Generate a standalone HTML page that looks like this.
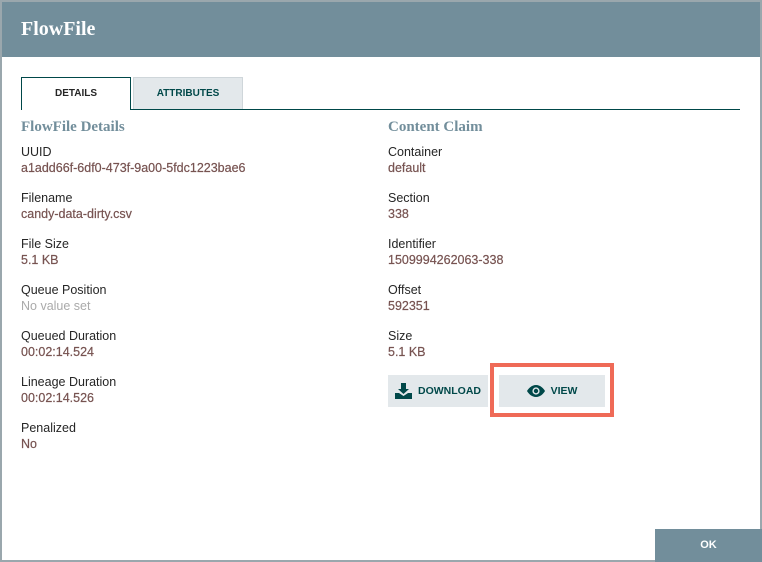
<!DOCTYPE html>
<html><head><style>
*{margin:0;padding:0;box-sizing:border-box}
body{width:762px;height:562px;background:#fff;position:relative;overflow:hidden;font-family:"Liberation Sans",sans-serif}
.hdr{position:absolute;left:0;top:0;width:762px;height:57px;background:#728e9b;border-top:2px solid #9aa7ad}
.hdr span{position:absolute;left:21px;top:16px;color:#fff;font:bold 20px "Liberation Serif",serif}
.tab{position:absolute;top:77px;height:33px;font-size:10px;font-weight:bold;text-align:center;line-height:32px}
.t1{left:21px;width:110px;border:1px solid #004849;border-bottom:none;background:#fff;color:#262626;z-index:2;height:33px}
.t2{left:133px;width:110px;background:#e3e8eb;color:#004849;border:1px solid #cfd6da;border-bottom:none;height:32px}
.line{position:absolute;left:21px;top:109px;width:719px;height:1px;background:#004849}
h3{position:absolute;font:bold 15px "Liberation Serif",serif;color:#728e9b}
.l{position:absolute;font-size:12.5px;color:#262626}
.v{position:absolute;font-size:12.5px;color:#775351;font-weight:500;-webkit-text-stroke:0.2px #775351}
.btn{position:absolute;background:#e3e8eb;color:#004849;font-size:10.5px;font-weight:bold;display:flex;align-items:center;justify-content:center;gap:6px}
.hl{position:absolute;left:490px;top:363px;width:124px;height:54px;border:4px solid #ef6a57}
.ok{position:absolute;left:655px;top:529px;width:107px;height:33px;background:#728e9b;color:#fff;font-size:11px;font-weight:bold;text-align:center;line-height:33px}
.lb{position:absolute;left:0;top:0;width:2px;height:562px;background:#9aa7ad}
.rb{position:absolute;right:0;top:0;width:2px;height:562px;background:#9aa7ad}
.bb{position:absolute;left:0;bottom:0;width:762px;height:2px;background:#9aa7ad}
</style></head><body>
<div class="hdr"><span>FlowFile</span></div>
<div class="lb"></div><div class="rb"></div><div class="bb"></div>
<div class="tab t1">DETAILS</div>
<div class="tab t2">ATTRIBUTES</div>
<div class="line"></div>
<h3 style="left:21px;top:119px">FlowFile Details</h3>
<h3 style="left:388px;top:119px">Content Claim</h3>
<div class="l" style="left:21px;top:145px">UUID</div><div class="v" style="left:21px;top:161px">a1add66f-6df0-473f-9a00-5fdc1223bae6</div>
<div class="l" style="left:21px;top:191px">Filename</div><div class="v" style="left:21px;top:207px">candy-data-dirty.csv</div>
<div class="l" style="left:21px;top:237px">File Size</div><div class="v" style="left:21px;top:253px">5.1 KB</div>
<div class="l" style="left:21px;top:283px">Queue Position</div><div class="v" style="left:21px;top:299px;color:#aaa;-webkit-text-stroke:0">No value set</div>
<div class="l" style="left:21px;top:329px">Queued Duration</div><div class="v" style="left:21px;top:345px">00:02:14.524</div>
<div class="l" style="left:21px;top:375px">Lineage Duration</div><div class="v" style="left:21px;top:391px">00:02:14.526</div>
<div class="l" style="left:21px;top:421px">Penalized</div><div class="v" style="left:21px;top:437px">No</div>
<div class="l" style="left:388px;top:145px">Container</div><div class="v" style="left:388px;top:161px">default</div>
<div class="l" style="left:388px;top:191px">Section</div><div class="v" style="left:388px;top:207px">338</div>
<div class="l" style="left:388px;top:237px">Identifier</div><div class="v" style="left:388px;top:253px">1509994262063-338</div>
<div class="l" style="left:388px;top:283px">Offset</div><div class="v" style="left:388px;top:299px">592351</div>
<div class="l" style="left:388px;top:329px">Size</div><div class="v" style="left:388px;top:345px">5.1 KB</div>
<div class="btn" style="left:388px;top:375px;width:100px;height:32px"><svg width="17" height="16" viewBox="0 0 17 16"><path d="M6 0h5v6h3l-5.5 5L3 6h3z" fill="#004849"/><path d="M0 10h4l4.5 3 4.5-3h4v6H0z" fill="#004849"/></svg>DOWNLOAD</div>
<div class="btn" style="left:499px;top:375px;width:106px;height:32px"><svg width="18" height="12" viewBox="0 0 18 12"><path d="M9 0C4.5 0 1.5 3.5 0 6c1.5 2.5 4.5 6 9 6s7.5-3.5 9-6C16.5 3.5 13.5 0 9 0z" fill="#004849"/><circle cx="9" cy="6" r="3.6" fill="#e3e8eb"/><circle cx="9" cy="6" r="2.2" fill="#004849"/></svg>VIEW</div>
<div class="hl"></div>
<div class="ok">OK</div>
</body></html>
